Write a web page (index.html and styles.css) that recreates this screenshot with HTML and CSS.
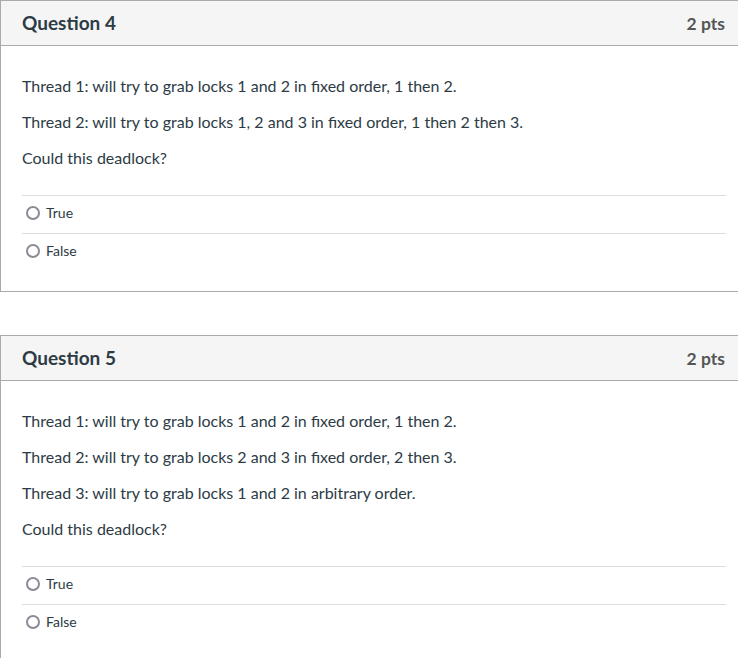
FILE: index.html
```html
<!DOCTYPE html>
<html>
<head>
<meta charset="utf-8">
<link rel="stylesheet" href="styles.css">
</head>
<body>
<div class="page">
  <div class="card">
    <div class="head">
      <h2 class="title">Question 4</h2>
      <span class="pts">2 pts</span>
    </div>
    <div class="body">
      <div class="text">
        <p>Thread 1: will try to grab locks 1 and 2 in fixed order, 1 then 2.</p>
        <p>Thread 2: will try to grab locks 1, 2 and 3 in fixed order, 1 then 2 then 3.</p>
        <p>Could this deadlock?</p>
      </div>
      <div class="answers">
        <label class="answer"><span class="radio"></span><span class="label">True</span></label>
        <label class="answer"><span class="radio"></span><span class="label">False</span></label>
      </div>
    </div>
  </div>
  <div class="card">
    <div class="head">
      <h2 class="title">Question 5</h2>
      <span class="pts">2 pts</span>
    </div>
    <div class="body">
      <div class="text">
        <p>Thread 1: will try to grab locks 1 and 2 in fixed order, 1 then 2.</p>
        <p>Thread 2: will try to grab locks 2 and 3 in fixed order, 2 then 3.</p>
        <p>Thread 3: will try to grab locks 1 and 2 in arbitrary order.</p>
        <p>Could this deadlock?</p>
      </div>
      <div class="answers">
        <label class="answer"><span class="radio"></span><span class="label">True</span></label>
        <label class="answer"><span class="radio"></span><span class="label">False</span></label>
      </div>
    </div>
  </div>
</div>
</body>
</html>
```
FILE: styles.css
```css
html, body {
  margin: 0;
  padding: 0;
  background: #fff;
  overflow: hidden;
}
body {
  font-family: Lato, "Open Sans", sans-serif;
  color: #2d3b45;
}
.page {
  width: 740px;
  display: flex;
  flex-direction: column;
  gap: 43px;
}
.card {
  border: 1px solid #aaaaaa;
  border-right: none;
}
.head {
  background: #f5f5f5;
  border-bottom: 1px solid #aaaaaa;
  height: 44px;
  display: flex;
  align-items: center;
  justify-content: space-between;
  padding: 0 15px 0 21px;
}
.title {
  margin: 0 0 2px 0;
  font-size: 19px;
  font-weight: 700;
  color: #2d3b45;
}
.pts {
  font-size: 17.5px;
  font-weight: 700;
  color: #555555;
}
.body {
  padding: 30px 14px 0 21px;
}
.text p {
  margin: 0 0 16px 0;
  font-size: 16px;
  line-height: 20px;
}
.answers {
  margin-top: 27px;
  padding-bottom: 20px;
}
.answer {
  display: flex;
  align-items: center;
  gap: 6px;
  height: 37px;
  box-sizing: content-box;
  padding: 0 0 4px 4px;
  height: 33px;
  border-top: 1px solid #dddddd;
  font-size: 14px;
}
.radio {
  width: 10px;
  height: 10px;
  border: 2px solid #8b8b96;
  border-radius: 50%;
  flex: none;
}
.label {
  color: #2d3b45;
}
```
